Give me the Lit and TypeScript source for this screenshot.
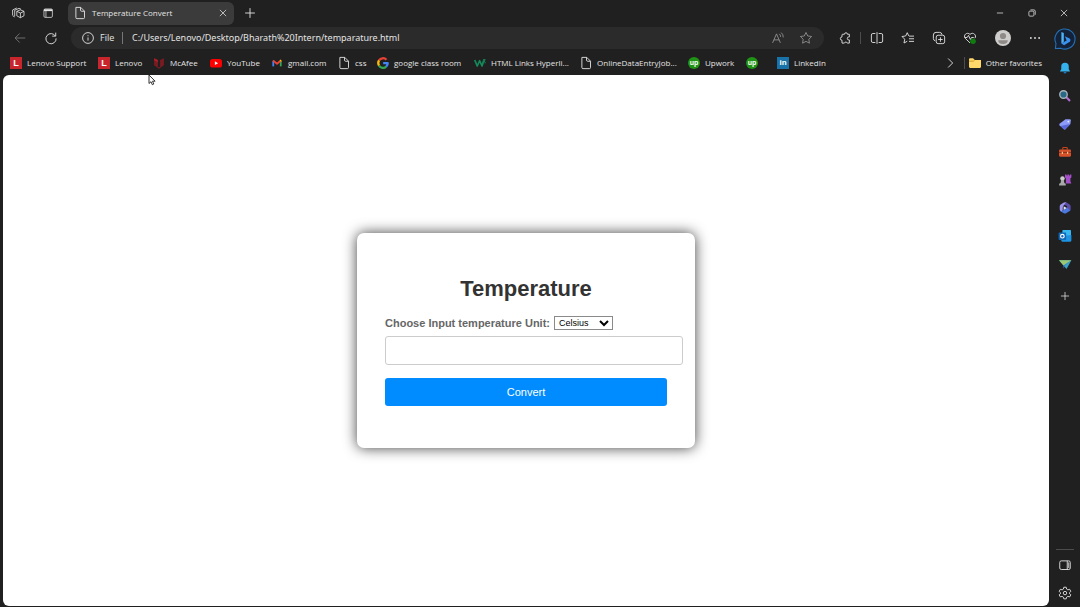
import { LitElement, html, css, svg, TemplateResult } from "lit";
import { customElement, property, state } from "lit/decorators.js";

const glyphs: Record<string, TemplateResult> = {
  workspaces: svg`<g stroke-width="1.1"><path d="M6.4 5.800 11.200 3.800 16 5.800v5.900l-4.800 2.600-4.800-2.600zM6.400 5.800l4.800 2.200 4.800-2.200M11.200 8v6.300"/><path d="M3.600 12.200V4.300L9.400 1.800 12 3M.8 11V4L6.400 1.300M3.600 13.200.8 11.600"/></g>`,
  tabs: svg`<rect x="1.500" y="1.500" width="13.500" height="13.500" rx="2"/><path d="M1.500 3.500h13.500" stroke-width="3"/><path d="M4.700 4v11"/>`,
  file: svg`<path d="M2.500 .5h6.500L14 5.500V14Q14 15.500 12.500 15.500H4Q2.500 15.500 2.500 14zM8.700.5v3.700Q8.700 5.700 10.200 5.700h3.600"/>`,
  close: svg`<path d="m3 3 10 10M13 3 3 13"/>`,
  plus: svg`<path d="M8 1.500v13M1.500 8h13"/>`,
  minimize: svg`<path d="M3 8h10"/>`,
  restore: svg`<rect x="3" y="5" width="8" height="8" rx="1.500"/><path d="M5.500 3H11q2.200 0 2.200 2.200v5.600"/>`,
  back: svg`<path d="M15 8H1.500M7.500 2 1.500 8l6 6"/>`,
  reload: svg`<path d="M13.900 5.500A6.800 6.800 0 1 0 14.800 8.500M14.300 .8V5.500H9.600"/>`,
  info: svg`<circle cx="8" cy="8" r="7.200"/><path d="M8 7.200v4.300M8 4.300v1.300"/>`,
  readAloud: svg`<path d="M.8 14.500 6 2.500l5.200 12M2.500 10.500h7M9.800 2.500q1.800 1.600 1.600 4M12.200.8q3 2.400 2.800 6.400"/>`,
  star: svg`<path d="m8 .6 2.300 4.700 5.200.7-3.800 3.700.9 5.200L8 12.500l-4.600 2.400.9-5.200L.5 6l5.200-.7z"/>`,
  puzzle: svg`<path d="M5 3h2.300a2 2 0 0 1 4 0h2.500v3.600h-.7a2 2 0 0 0 0 4h.7v4.200H11a2 2 0 0 0-3.800 0H4V11a2.200 2.200 0 1 1 0-4.400V4q0-1 1-1z"/>`,
  split: svg`<path d="M5.800 2H2.500Q.5 2 .5 4v8q0 2 2 2h3.300M10.200 2h3.300Q15.500 2 15.500 4v8q0 2-2 2h-3.300M8 .2v15.600"/>`,
  favorites: svg`<path d="M9 5.200 7 .9 4.900 5.300 0 6l3.600 3.600-.9 5.100L7 12.300M9.300 5.500H16M9.300 9H16M9.300 12.500H16"/>`,
  collections: svg`<path d="M3 11.800Q.5 11.200.5 8.700V4q0-3.500 3.500-3.500h5q2.500 0 3 3"/><rect x="4.300" y="4.300" width="11.200" height="11.200" rx="2.500"/><path d="M9.900 7v6M6.900 10h6"/>`,
  health: svg`<path d="M8 14.500 1.500 8.300C-1.500 4.300 4-.8 8 3.200c4-4 9.500 1.100 6.500 5.100M1 7.300h3.200L6 4.500 8.500 10 10 7.300h3"/><circle cx="12" cy="12.300" r="3.700" fill="#107c10" stroke="none"/>`,
  avatar: svg`<g stroke="none"><circle cx="8" cy="8" r="8" fill="#cfcdcb"/><circle cx="8" cy="6" r="3.100" fill="#8d8a88"/><path d="M3.200 10.300h9.600q0 3.700-4.800 3.700t-4.800-3.700z" fill="#8d8a88"/></g>`,
  more: svg`<g fill="currentColor" stroke="none"><circle cx="2.500" cy="8" r="1.200"/><circle cx="8" cy="8" r="1.200"/><circle cx="13.500" cy="8" r="1.200"/></g>`,
  chevron: svg`<path d="m5.500 2 6 6-6 6"/>`,
  folder: svg`<path d="M0 3q0-1.500 1.500-1.500h4L7.500 4H16v9q0 1.500-1.500 1.500h-13Q0 14.500 0 13z" fill="#ffd869" stroke="none"/><path d="M0 5.500h5.800L7.600 4" stroke="#c99422"/>`,
  mcafee: svg`<path d="m1.500 1.500 5 2.500v9L8 14l1.500-1V4l5-2.500v9.500L8 15.500 1.500 11z" fill="#7c1a22" stroke="none"/><path d="m1.500 1.500 5 2.500v3l-5-2.500z" fill="#a81e2a" stroke="none"/>`,
  youtube: svg`<rect x="0" y="2.500" width="16" height="11.500" rx="3.500" fill="#f00" stroke="none"/><path d="m6.500 5.600 4.300 2.600-4.300 2.600z" fill="#fff" stroke="none"/>`,
  gmail: svg`<g stroke-width="2.400"><path d="M3 12.500V5" stroke="#4285f4"/><path d="M13 12.500V5" stroke="#34a853"/><path d="M2.800 4.700 8 9l5.200-4.300" stroke="#ea4335"/><path d="m12.300 5.400 1.300-1.100" stroke="#fbbc04"/></g>`,
  google: svg`<g stroke-width="3" stroke-linecap="butt"><path d="M12.600 3.600A6.300 6.300 0 0 0 2.700 4.600" stroke="#ea4335"/><path d="M2.700 4.600a6.300 6.300 0 0 0 0 6.800" stroke="#fbbc05"/><path d="M2.700 11.400a6.300 6.300 0 0 0 9.600 1.400" stroke="#34a853"/><path d="M12.300 12.800A6.300 6.300 0 0 0 14.300 8H8.200" stroke="#4285f4"/></g>`,
  w3: svg`<path d="m1 4 3.300 8L7.500 5l3.200 7L13 4.500" stroke="#128a5b" stroke-width="2.300"/><path d="M12 3.500h3l-1.500 2.300q2 .6 1.200 2.600" stroke="#128a5b" stroke-width="1.300"/>`,
  bell: svg`<path d="M8 1a5 5 0 0 0-5 5v3.500L1.500 12v.8h13V12L13 9.500V6a5 5 0 0 0-5-5z" fill="#35b1ec" stroke="none"/><path d="M6 13.200h4q-.3 2-2 2t-2-2z" fill="#1677c4" stroke="none"/>`,
  search: svg`<path d="m9.800 9.800 4.900 4.900" stroke="#b16bd0" stroke-width="2.800"/><circle cx="6" cy="6" r="5" fill="#276a85" stroke="#a9b4ba" stroke-width="1.800"/>`,
  tag: svg`<path d="M8.700 1.500h5.800q1.400.2 1.300 1.600l-.6 5-6.700 6.800q-1 .8-2 0L.7 9.500q-.8-1 0-2z" fill="#8c9bf5" stroke="none"/><path d="m15.200 8.100-6.700 6.800q-1 .8-2 0L2 10.800z" fill="#5868d8" stroke="none"/><circle cx="12.500" cy="4.700" r="1.200" fill="#e8ebff" stroke="none"/>`,
  briefcase: svg`<path d="M5 5V3q0-1 1-1h4q1 0 1 1v2" stroke="#c5441c" stroke-width="1.500"/><rect x="0" y="4.500" width="16" height="9.700" rx="1.500" fill="#d6522b" stroke="none"/><path d="M0 8.500h16" stroke="#842b16"/><path d="M4.500 7.500v3M11.500 7.500v3" stroke="#ffc18a" stroke-width="1.600"/>`,
  games: svg`<path d="M8 .5h2v1.600h1.300V.5h2v1.600h1.200V.5H16.500v4l-1.300 1.200V9.500l1.300 3H9.200V6L8 4.800z" fill="#a44fc9" stroke="none"/><circle cx="4.600" cy="6" r="3" fill="#cacaca" stroke="none"/><path d="M2.800 8h3.600l.7 4 1.900 1v2.200H.2V13l1.900-1z" fill="#a9a9a9" stroke="none"/>`,
  m365: svg`<g stroke="none"><path d="M1 5.500Q1 4 2.300 3.200L6.500.8Q8.500-.2 10 .8L7.300 3.500Q5 5 5 7.500v3.700L3 12.300Q1 12 1 10z" fill="#9c94ee"/><path d="M10 .8l4.200 2.400Q15.500 4 15.500 5.500v4.800q0 1.300-1.200 2L10 9.800l1-4.300-3.700-2z" fill="#5c4dac"/><path d="M1.500 11.500q1.500 1 3.500-.3L11.300 7.500l3.500 4.300-5.300 3.200Q8 15.800 6.500 15L2.300 12.600z" fill="#4a78e0"/><path d="m6.200 5.500 4.300 2.500-4.300 2.500z" fill="#dfe3ff"/></g>`,
  outlook: svg`<rect x="4.500" y="0" width="11.500" height="9" rx="1" fill="#35b8f1" stroke="none"/><path d="M3 8 16.500 6.500v7.500q0 1.500-1.500 1.500H4.500q-1.500 0-1.500-1.500z" fill="#1d93e2" stroke="none"/><rect x="-.5" y="3.300" width="10" height="10" rx="1.200" fill="#0f68b8" stroke="none"/><circle cx="4.500" cy="8.300" r="2.400" stroke="#fff" stroke-width="1.500"/>`,
  send: svg`<path d="m0 3 16.500 0-6.500 11.500-4-4.500z" fill="#35a6c5" stroke="none"/><path d="m0 3h16.500L6 10z" fill="#9bc873" stroke="none"/><path d="M16.500 3 8.500 9.800 6 14V10z" fill="#3e7ccb" stroke="none"/>`,
  panel: svg`<rect x="1" y="2.500" width="14" height="11.500" rx="2"/><path d="M11 2.500v11.500M13 4.500v7.500"/>`,
  gear: svg`<path d="m6.400.3-.6 2.500-1.600 1-2.400-.7L.2 5.800 2 7.500v1.400L.2 10.500l1.600 2.700 2.400-.7 1.600 1 .6 2.300h3.200l.6-2.300 1.600-1 2.400.7 1.600-2.700L14 8.900V7.500l1.800-1.700-1.600-2.700-2.400.7-1.600-1L9.600.3z"/><circle cx="8" cy="8.100" r="2.300"/>`,
  bing: svg`<path d="M1.600 14.400 2 11A6.700 6.700 0 1 1 5.200 14.100z" fill="#132238" stroke="#2372ba" stroke-width=".7"/><path d="M5.600 3.300 7.200 4v6L5.600 11z" fill="#4fb4f6" stroke="none"/><path d="m7.900 6.200 3.200 1.400q1 .7.300 2L7.400 12.200 5.600 11l3.500-2z" fill="#3b91ee" stroke="none"/>`,
};

@customElement("ui-icon")
export class UiIcon extends LitElement {
  @property() name = "";

  static styles = css`
    :host { display: inline-flex; width: 12px; height: 12px; flex: none; }
    .glyph {
      width: 100%; height: 100%; overflow: visible; fill: none;
      stroke: currentColor; stroke-width: 1.2; stroke-linejoin: round;
    }
  `;

  render() {
    return html`<svg class="glyph" viewBox="0 0 16 16" aria-hidden="true">${glyphs[this.name]}</svg>`;
  }
}

interface Bookmark { label: string; icon?: string; badge?: string; kind?: string; }

@customElement("temperature-form")
export class TemperatureForm extends LitElement {
  @state() private result = "";

  static styles = css`
    :host { display: block; width: 338px; max-width: 100%; }
    .card {
      box-sizing: border-box; padding: 28px; border-radius: 7px; background: #fff;
      box-shadow: 0 0 14px rgba(0, 0, 0, 0.75);
      font-family: "Liberation Sans", Arial, sans-serif;
    }
    .title { margin: 15px 0 14px; font-size: 22px; line-height: 26px; text-align: center; color: #333; }
    .row { display: flex; align-items: center; gap: 4px; height: 14px; margin-bottom: 6px; }
    .label { font-size: 11px; line-height: 14px; font-weight: bold; color: #666; white-space: nowrap; }
    .unit {
      box-sizing: border-box; width: 59px; height: 14px; padding: 0; border: 1px solid #8a8a8a; border-radius: 0;
      background: #fff; color: #000; font: 9px/12px "Liberation Sans", Arial, sans-serif;
    }
    .value {
      display: block; box-sizing: content-box; width: 100%; height: 13px; padding: 7px;
      border: 1px solid #ccc; border-radius: 3px; background: #fff; font: 11px/13px "Liberation Sans", Arial, sans-serif;
    }
    .convert {
      display: block; width: 100%; height: 28px; margin: 13px 0 14px; padding: 0; border: 0; border-radius: 3px;
      background: #008cff; color: #fff; font: 11px/28px "Liberation Sans", Arial, sans-serif; cursor: pointer;
    }
    .result { font-size: 11px; text-align: center; color: #333; }
  `;

  private convert(e: Event) {
    e.preventDefault();
    const unit = (this.renderRoot.querySelector("#unit") as HTMLSelectElement).value;
    const field = this.renderRoot.querySelector("#value") as HTMLInputElement;
    const n = Number(field.value);
    if (!field.value || Number.isNaN(n)) return;
    this.result = unit === "Celsius" ? `${((n * 9) / 5 + 32).toFixed(1)} °F` : `${(((n - 32) * 5) / 9).toFixed(1)} °C`;
  }

  render() {
    return html`
      <form class="card" @submit=${this.convert}>
        <h1 class="title">Temperature</h1>
        <div class="row">
          <label class="label" for="unit">Choose Input temperature Unit:</label>
          <select class="unit" id="unit"><option>Celsius</option><option>Fahrenheit</option></select>
        </div>
        <input class="value" id="value" type="text" inputmode="decimal" aria-label="Temperature" />
        <button class="convert" type="submit">Convert</button>
        ${this.result ? html`<div class="result" role="status">${this.result}</div>` : null}
      </form>
    `;
  }
}

@customElement("app-root")
export class AppRoot extends LitElement {
  private bookmarks: Bookmark[] = [
    { label: "Lenovo Support", badge: "L", kind: "lenovo" },
    { label: "Lenovo", badge: "L", kind: "lenovo" },
    { label: "McAfee", icon: "mcafee" },
    { label: "YouTube", icon: "youtube" },
    { label: "gmail.com", icon: "gmail" },
    { label: "css", icon: "file" },
    { label: "google class room", icon: "google" },
    { label: "HTML Links Hyperli...", icon: "w3" },
    { label: "OnlineDataEntryJob...", icon: "file" },
    { label: "Upwork", badge: "up", kind: "upwork" },
    { label: "", badge: "up", kind: "upwork" },
    { label: "LinkedIn", badge: "in", kind: "linkedin" },
  ];

  static styles = css`
    :host {
      display: flex; flex-direction: column; height: 100vh; overflow: hidden; position: relative;
      background: #202020; color: #e4e4e4; font: 9px/12px "Open Sans", "Noto Sans", sans-serif;
    }
    button {
      display: flex; align-items: center; justify-content: center; flex: none;
      width: 31px; height: 100%; margin: 0; padding: 0; border: 0; background: none; color: inherit; font: inherit;
    }
    a { color: inherit; text-decoration: none; }
    .titlebar { display: flex; align-items: center; flex: none; height: 26px; padding-left: 3px; }
    .titlebar button { width: 30px; }
    .tab {
      display: flex; align-items: center; gap: 6px; box-sizing: border-box; width: 166px; height: 23px;
      margin-left: 5px; padding-left: 6px; border-radius: 6px; background: #3b3b3b;
    }
    .tab-title { flex: 1; white-space: nowrap; font-size: 8px; }
    .tab .tab-close { width: 22px; }
    .titlebar .wide { width: 32px; }
    .spacer { flex: 1; }
    .small { width: 10px; height: 10px; }
    .body { display: flex; flex: 1; min-height: 0; }
    .main { display: flex; flex-direction: column; flex: 1; min-width: 0; }
    .toolbar { display: flex; align-items: center; flex: none; height: 24px; padding-left: 4px; }
    .dim { color: #777; }
    .address {
      display: flex; align-items: center; flex: 1; min-width: 0; height: 22px; margin: 0 5px;
      box-sizing: border-box; padding-left: 11px; border-radius: 11px; background: #2b2b2b;
    }
    .scheme { margin-left: 6px; width: 23px; box-sizing: border-box; border-right: 1px solid #777; }
    .url {
      flex: 1; min-width: 0; margin-left: 9px; padding: 0; border: 0; outline: 0; background: none;
      color: inherit; font: 9px/12px "Noto Sans", "Open Sans", sans-serif;
    }
    .address button { width: 28px; color: #909090; }
    .address button:last-child { margin-right: 4px; }
    .divider { flex: none; width: 1px; height: 12px; background: #4c4c4c; }
    .avatar-button { width: 35px; }
    .avatar { width: 16px; height: 16px; }
    .more-button { width: 29px; }
    .bookmarks { display: flex; align-items: center; flex: none; height: 25px; padding: 0 7px 0 10px; }
    .bookmark-list {
      display: grid; flex: 1; min-width: 0; align-items: center;
      grid-template-columns: 88px 55px 57px 61px 67px 39px 97px 106px 108px 58px 31px auto;
    }
    .bookmark { display: flex; align-items: center; gap: 5px; white-space: nowrap; font-size: 8px; }
    .badge {
      display: flex; align-items: center; justify-content: center; flex: none; width: 12px; height: 12px;
      color: #fff; font: bold 9px/12px "Liberation Sans", Arial, sans-serif;
    }
    .lenovo { background: #c9252c; }
    .upwork { border-radius: 50%; background: #1f9414; font-size: 7px; }
    .linkedin { background: #1a73a8; font-size: 8px; }
    .bookmarks button { width: 27px; }
    .other { margin-left: 4px; }
    .page {
      display: flex; align-items: center; justify-content: center; flex: 1; min-height: 0;
      margin: 0 0 1px 3px; border-radius: 6px; background: #fff;
    }
    .sidebar { display: flex; flex-direction: column; align-items: center; flex: none; width: 31px; }
    .sidebar button { height: 28px; }
    .sidebar .bing-button { height: 26px; margin-bottom: 2px; }
    .bing { width: 24px; height: 24px; }
    .sidebar .add { margin-top: 4px; }
    .line { width: 18px; height: 1px; background: #4c4c4c; margin-bottom: 1px; }
    .pointer { position: absolute; left: 148px; top: 74px; width: 8px; height: 12px; }
    .pointer-shape { fill: #fff; stroke: #333; stroke-width: 1; }
  `;

  private iconButton(name: string, label: string, cls = "", iconCls = "") {
    return html`<button class=${cls} aria-label=${label}><ui-icon class=${iconCls} name=${name}></ui-icon></button>`;
  }

  render() {
    return html`
      <header class="titlebar">
        ${this.iconButton("workspaces", "Workspaces")}
        ${this.iconButton("tabs", "Tab actions", "", "small")}
        <div class="tab">
          <ui-icon name="file"></ui-icon>
          <span class="tab-title">Temperature Convert</span>
          ${this.iconButton("close", "Close tab", "tab-close", "small")}
        </div>
        ${this.iconButton("plus", "New tab", "wide")}
        <span class="spacer"></span>
        ${this.iconButton("minimize", "Minimize", "wide", "small")}
        ${this.iconButton("restore", "Restore", "wide", "small")}
        ${this.iconButton("close", "Close", "wide", "small")}
      </header>
      <div class="body">
        <div class="main">
          <nav class="toolbar">
            ${this.iconButton("back", "Back", "dim")}
            ${this.iconButton("reload", "Reload")}
            <div class="address">
              <ui-icon name="info"></ui-icon>
              <span class="scheme">File</span>
              <input class="url" aria-label="Address" value="C:/Users/Lenovo/Desktop/Bharath%20Intern/temparature.html" />
              ${this.iconButton("readAloud", "Read aloud")}
              ${this.iconButton("star", "Add to favorites")}
            </div>
            ${this.iconButton("puzzle", "Extensions")}
            <span class="divider"></span>
            ${this.iconButton("split", "Split screen")}
            ${this.iconButton("favorites", "Favorites")}
            ${this.iconButton("collections", "Collections")}
            ${this.iconButton("health", "Browser essentials")}
            ${this.iconButton("avatar", "Profile", "avatar-button", "avatar")}
            ${this.iconButton("more", "More", "more-button")}
          </nav>
          <nav class="bookmarks">
            <div class="bookmark-list">
              ${this.bookmarks.map(
                (b) => html`<a class="bookmark" href="#" aria-label=${b.label || "Upwork"}>
                  ${b.icon ? html`<ui-icon name=${b.icon}></ui-icon>` : html`<span class="badge ${b.kind}">${b.badge}</span>`}
                  ${b.label ? html`<span>${b.label}</span>` : null}
                </a>`
              )}
            </div>
            ${this.iconButton("chevron", "More favorites")}
            <span class="divider"></span>
            <a class="bookmark other" href="#"><ui-icon name="folder"></ui-icon><span>Other favorites</span></a>
          </nav>
          <main class="page"><temperature-form></temperature-form></main>
        </div>
        <aside class="sidebar">
          ${this.iconButton("bing", "Bing", "bing-button", "bing")}
          ${["bell", "search", "tag", "briefcase", "games", "m365", "outlook", "send"].map((n) => this.iconButton(n, n))}
          ${this.iconButton("plus", "Add", "add", "small")}
          <span class="spacer"></span>
          <span class="line"></span>
          ${this.iconButton("panel", "Hide sidebar")}
          ${this.iconButton("gear", "Settings")}
        </aside>
      </div>
      <svg class="pointer" viewBox="0 0 8 12" aria-hidden="true">
        <path class="pointer-shape" d="M1 1v8.500l2-1.800 1.300 3 1.500-.7-1.300-2.800h2.600z" />
      </svg>
    `;
  }
}
